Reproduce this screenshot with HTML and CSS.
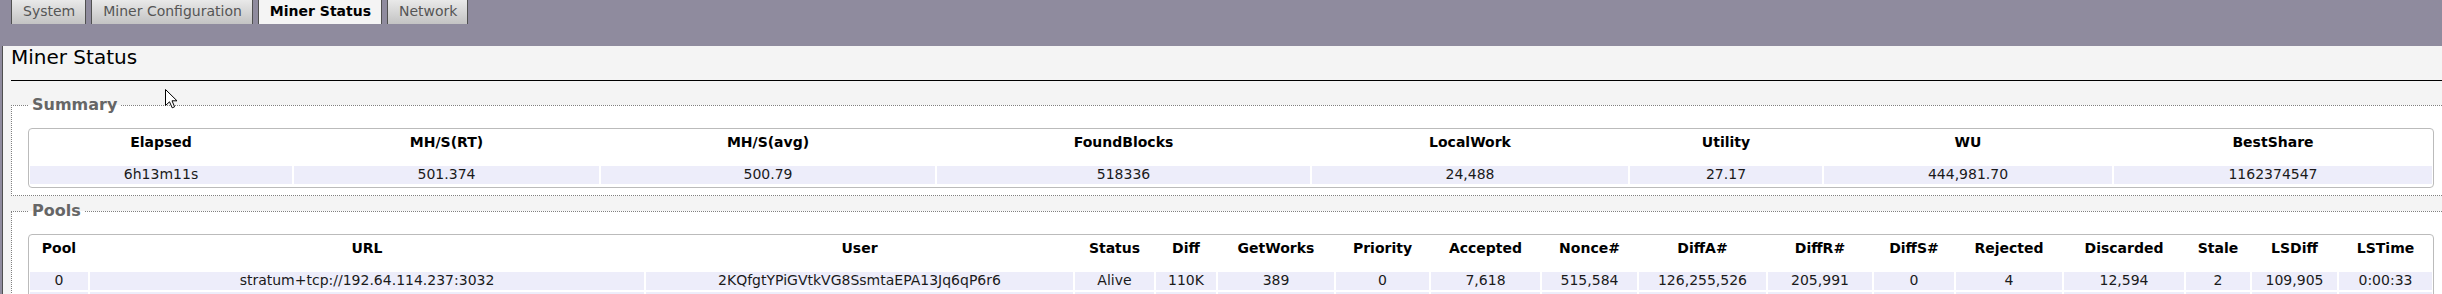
FILE: index.html
```html
<!DOCTYPE html>
<html>
<head>
<meta charset="utf-8">
<title>Miner Status</title>
<link rel="stylesheet" href="styles.css">
</head>
<body>
<div class="tabbar">
  <div class="tab">System</div>
  <div class="tab">Miner Configuration</div>
  <div class="tab active">Miner Status</div>
  <div class="tab">Network</div>
</div>
<div class="content">
  <h2 class="title">Miner Status</h2>

  <fieldset class="section">
    <legend>Summary</legend>
    <div class="tbox">
      <table class="grid">
        <tr>
          <th class="s1">Elapsed</th>
          <th class="s2">MH/S(RT)</th>
          <th class="s3">MH/S(avg)</th>
          <th class="s4">FoundBlocks</th>
          <th class="s5">LocalWork</th>
          <th class="s6">Utility</th>
          <th class="s7">WU</th>
          <th class="s8">BestShare</th>
        </tr>
        <tr class="row">
          <td>6h13m11s</td>
          <td>501.374</td>
          <td>500.79</td>
          <td>518336</td>
          <td>24,488</td>
          <td>27.17</td>
          <td>444,981.70</td>
          <td>1162374547</td>
        </tr>
      </table>
    </div>
  </fieldset>

  <fieldset class="section">
    <legend>Pools</legend>
    <div class="tbox">
      <table class="grid">
        <tr>
          <th class="p1">Pool</th>
          <th class="p2">URL</th>
          <th class="p3">User</th>
          <th class="p4">Status</th>
          <th class="p5">Diff</th>
          <th class="p6">GetWorks</th>
          <th class="p7">Priority</th>
          <th class="p8">Accepted</th>
          <th class="p9">Nonce#</th>
          <th class="p10">DiffA#</th>
          <th class="p11">DiffR#</th>
          <th class="p12">DiffS#</th>
          <th class="p13">Rejected</th>
          <th class="p14">Discarded</th>
          <th class="p15">Stale</th>
          <th class="p16">LSDiff</th>
          <th class="p17">LSTime</th>
        </tr>
        <tr class="row">
          <td>0</td>
          <td>stratum+tcp://192.64.114.237:3032</td>
          <td>2KQfgtYPiGVtkVG8SsmtaEPA13Jq6qP6r6</td>
          <td>Alive</td>
          <td>110K</td>
          <td>389</td>
          <td>0</td>
          <td>7,618</td>
          <td>515,584</td>
          <td>126,255,526</td>
          <td>205,991</td>
          <td>0</td>
          <td>4</td>
          <td>12,594</td>
          <td>2</td>
          <td>109,905</td>
          <td>0:00:33</td>
        </tr>
        <tr class="row empty">
          <td></td><td></td><td></td><td></td><td></td><td></td>
          <td></td><td></td><td></td><td></td><td></td><td></td>
          <td></td><td></td><td></td><td></td><td></td>
        </tr>
      </table>
    </div>
  </fieldset>
</div>

<svg class="cursor" width="13" height="20" viewBox="0 0 13 20" aria-hidden="true">
  <path d="M0.5 0.5 L0.5 16.5 L4.5 12.8 L7.2 18.8 L9.6 17.8 L7 11.8 L12 11.8 Z" fill="#fff" stroke="#000" stroke-width="1" stroke-linejoin="miter"/>
</svg>
</body>
</html>
```

FILE: styles.css
```css
html {
  overflow: hidden;
}

body {
  margin: 0;
  background: #8f8b9e;
  font-family: "DejaVu Sans", Verdana, sans-serif;
  font-size: 14px;
  color: #1a1a1a;
  position: relative;
}

.tabbar {
  display: flex;
  height: 24px;
  padding-left: 11px;
  gap: 5px;
}

.tab {
  box-sizing: border-box;
  height: 24px;
  padding: 3px 10px 0 11px;
  line-height: 17px;
  border-left: 1px solid #505050;
  border-right: 1px solid #505050;
  background: linear-gradient(#e9e9e9, #c3c3c3);
  color: #555;
  white-space: nowrap;
}

.tab.active {
  background: #f4f4f4;
  color: #000;
  font-weight: bold;
}

.content {
  margin-left: 2px;
  border-left: 1px solid #505050;
  background: #f4f4f4;
  padding: 0 0 20px 8px;
  min-height: 300px;
}

.title {
  margin: 22px 0 0 0;
  padding-bottom: 11px;
  border-bottom: 1px solid #000;
  font-size: 20px;
  line-height: 23px;
  font-weight: normal;
  color: #000;
}

.section {
  margin: 15px 0 0 0;
  padding: 14px 8px 7px 16px;
  border: 1px dotted #808080;
  border-right: none;
  background: #fff;
  min-width: 0;
}

.section + .section {
  margin-top: 6px;
}

.section legend {
  padding: 0 4px;
  font-size: 16px;
  line-height: 18px;
  font-weight: bold;
  color: #666;
}

.tbox {
  border: 1px solid #bbb;
  border-radius: 4px;
  padding-bottom: 1px;
  background: #fff;
}

.grid {
  table-layout: fixed;
  width: calc(100% + 2px);
  margin: -1px -1px 0 -1px;
  border-collapse: separate;
  border-spacing: 2px;
}

.grid th {
  box-sizing: border-box;
  padding: 4px 0 13px;
  line-height: 17px;
  font-weight: bold;
  color: #000;
  text-align: center;
  white-space: nowrap;
}

.grid td {
  padding: 0 0 1px;
  line-height: 17px;
  text-align: center;
  white-space: nowrap;
  overflow: hidden;
}

.row td {
  background: #ededfa;
}

.row.empty td {
  height: 18px;
}

/* summary columns */
.s1 { width: 262px; }
.s2 { width: 305px; }
.s3 { width: 334px; }
.s4 { width: 373px; }
.s5 { width: 316px; }
.s6 { width: 192px; }
.s7 { width: 288px; }
.s8 { width: 318px; }

/* pool columns */
.p1 { width: 58px; }
.p2 { width: 554px; }
.p3 { width: 427px; }
.p4 { width: 79px; }
.p5 { width: 60px; }
.p6 { width: 116px; }
.p7 { width: 93px; }
.p8 { width: 109px; }
.p9 { width: 95px; }
.p10 { width: 127px; }
.p11 { width: 104px; }
.p12 { width: 80px; }
.p13 { width: 106px; }
.p14 { width: 120px; }
.p15 { width: 64px; }
.p16 { width: 85px; }
.p17 { width: 93px; }

.cursor {
  position: absolute;
  left: 165px;
  top: 89px;
}
```
